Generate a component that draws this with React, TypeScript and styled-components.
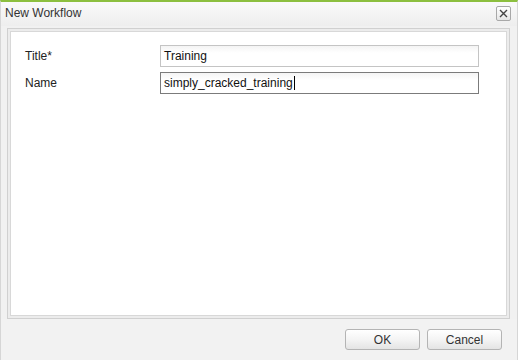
import { FunctionComponent } from "react";
import styled, { createGlobalStyle } from "styled-components";

const GlobalStyle = createGlobalStyle`
  html, body {
    margin: 0;
    padding: 0;
    background: #ffffff;
  }
  body {
    font-family: "Liberation Sans", Arial, sans-serif;
    font-size: 12px;
    color: #222;
  }
`;

const Dialog = styled.div`
  width: 518px;
  height: 360px;
  box-sizing: border-box;
  border-top: 2px solid #8cbf3f;
  border-left: 1px solid #d6d6d6;
  border-right: 1px solid #d6d6d6;
  background: #f1f1f1;
  display: flex;
  flex-direction: column;
`;

const Header = styled.div`
  height: 24px;
  display: flex;
  align-items: center;
  justify-content: space-between;
  padding: 0 6px 0 4px;
  background: linear-gradient(180deg, #fafafa 0%, #eeeeee 100%);
  .title {
    font-size: 12px;
    color: #333;
    margin-top: -2px;
  }
`;

const CloseButton = styled.button`
  width: 15px;
  height: 15px;
  padding: 0;
  border: 1px solid #a8a8a8;
  border-radius: 2px;
  background: linear-gradient(180deg, #ffffff 0%, #e6e6e6 100%);
  display: flex;
  align-items: center;
  justify-content: center;
  margin-top: -1px;
`;

const Body = styled.div`
  flex: 1;
  margin: 2px 7px 0 6px;
  border: 1px solid #d0d0d0;
  padding: 2px;
  background: #ececec;
  display: flex;
`;

const Panel = styled.div`
  flex: 1;
  background: #ffffff;
  border: 1px solid #d8d8d8;
  padding: 13px 0 0 14px;
  display: flex;
  flex-direction: column;
  gap: 5px;
`;

const Row = styled.div`
  display: flex;
  align-items: center;
  label {
    width: 135px;
    font-size: 12px;
    color: #222;
  }
`;

const Field = styled.div<{ $focused?: boolean }>`
  box-sizing: border-box;
  width: 319px;
  height: 22px;
  border: 1px solid ${(p) => (p.$focused ? "#7b7b7b" : "#c4c4c4")};
  background: linear-gradient(180deg, #f4f4f4 0%, #ffffff 35%, #ffffff 100%);
  display: flex;
  align-items: center;
  padding-left: 3px;
  font-size: 12px;
  color: #111;
  .caret {
    display: inline-block;
    width: 1px;
    height: 14px;
    background: #000;
    margin-left: 1px;
  }
`;

const Footer = styled.div`
  height: 41px;
  display: flex;
  justify-content: flex-end;
  align-items: center;
  gap: 7px;
  padding-right: 15px;
  background: #f2f2f2;
`;

const Button = styled.button`
  width: 75px;
  height: 21px;
  border: 1px solid #b4b4b4;
  border-radius: 3px;
  background: linear-gradient(180deg, #ffffff 0%, #f4f4f4 50%, #e4e4e4 100%);
  font-family: "Liberation Sans", Arial, sans-serif;
  font-size: 12px;
  color: #333;
  padding: 0;
`;

const App: FunctionComponent = () => {
  return (
    <>
      <GlobalStyle />
      <Dialog>
        <Header>
          <span className="title">New Workflow</span>
          <CloseButton>
            <svg width="9" height="9" viewBox="0 0 9 9">
              <path d="M1 1L8 8M8 1L1 8" stroke="#444" strokeWidth="1.4" />
            </svg>
          </CloseButton>
        </Header>
        <Body>
          <Panel>
            <Row>
              <label>Title*</label>
              <Field>Training</Field>
            </Row>
            <Row>
              <label>Name</label>
              <Field $focused>
                simply_cracked_training
                <span className="caret" />
              </Field>
            </Row>
          </Panel>
        </Body>
        <Footer>
          <Button>OK</Button>
          <Button>Cancel</Button>
        </Footer>
      </Dialog>
    </>
  );
};

export default App;
